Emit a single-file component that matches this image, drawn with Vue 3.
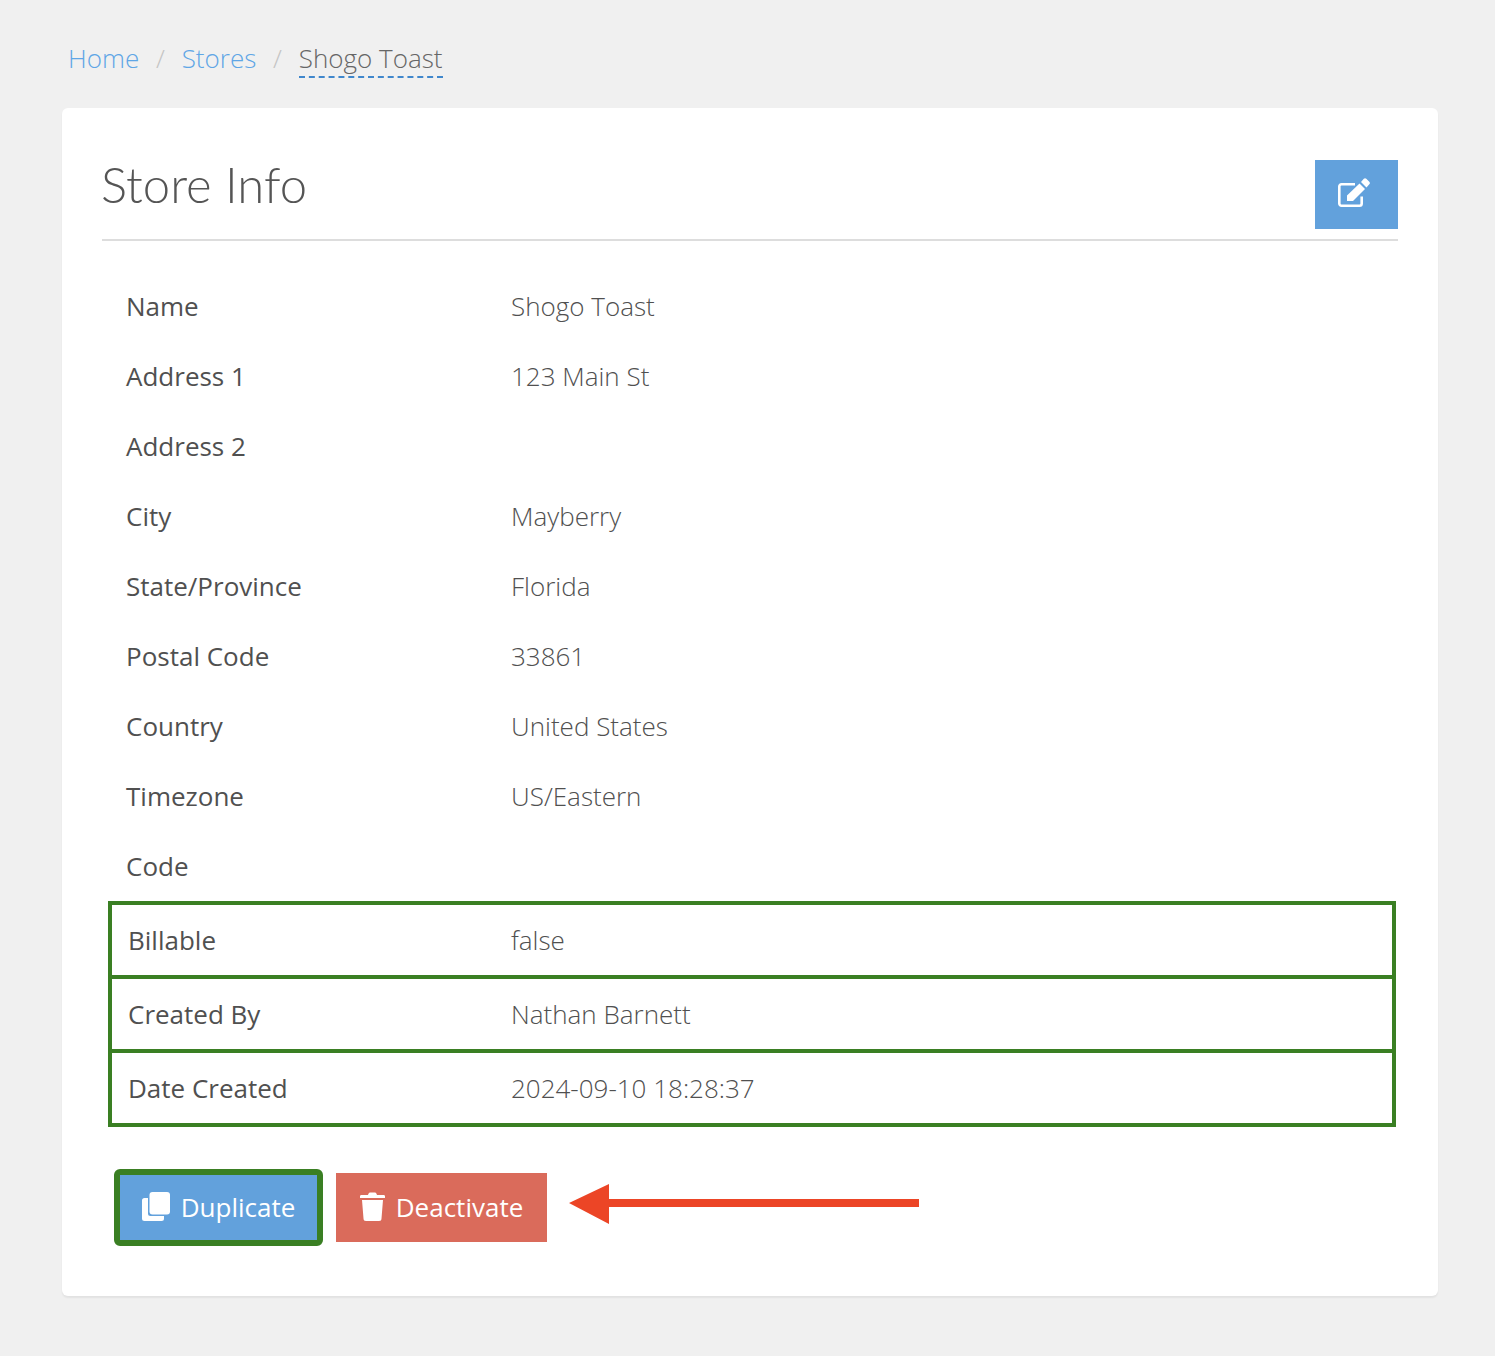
<script setup>
const plainRows = [
  ['Name', 'Shogo Toast'],
  ['Address 1', '123 Main St'],
  ['Address 2', ''],
  ['City', 'Mayberry'],
  ['State/Province', 'Florida'],
  ['Postal Code', '33861'],
  ['Country', 'United States'],
  ['Timezone', 'US/Eastern'],
  ['Code', ''],
]
const boxedRows = [
  ['Billable', 'false'],
  ['Created By', 'Nathan Barnett'],
  ['Date Created', '2024-09-10 18:28:37'],
]
</script>

<template>
  <div class="page">
    <nav class="crumbs">
      <a class="crumb-link">Home</a>
      <span class="sep">/</span>
      <a class="crumb-link">Stores</a>
      <span class="sep">/</span>
      <span class="current">Shogo Toast</span>
    </nav>
    <main class="card">
      <header class="head">
        <h1>Store Info</h1>
        <button class="edit" aria-label="Edit">
          <svg width="32" height="29" viewBox="0 0 32 29">
            <path d="M17 6.300H3.500A2.200 2.200 0 0 0 1.300 8.500V25.500A2.200 2.200 0 0 0 3.500 27.700H21.500A2.200 2.200 0 0 0 23.700 25.500V18.500" fill="none" stroke="#fff" stroke-width="2.600"/>
            <path d="M9 23V17.500L21.500 5.500 27 11 15 23z" fill="#fff"/>
            <path d="M23 4 25.800.800a1.800 1.800 0 0 1 2.500 0l3 3a1.800 1.800 0 0 1 0 2.500L28.500 9.500z" fill="#fff"/>
          </svg>
        </button>
      </header>
      <section class="rows">
        <div v-for="r in plainRows" :key="r[0]" class="row">
          <div class="label">{{ r[0] }}</div>
          <div class="value">{{ r[1] }}</div>
        </div>
      </section>
      <section class="boxed">
        <div v-for="r in boxedRows" :key="r[0]" class="box-row">
          <div class="label">{{ r[0] }}</div>
          <div class="value">{{ r[1] }}</div>
        </div>
      </section>
      <div class="actions">
        <button class="btn dup">
          <svg width="28" height="29" viewBox="0 0 28 29">
            <path d="M6 6V21.500a2.500 2.500 0 0 0 2.500 2.500H22v2.500a2.500 2.500 0 0 1-2.500 2.500H2.500A2.500 2.500 0 0 1 0 26.500V8.500A2.500 2.500 0 0 1 2.500 6z" fill="#fff"/>
            <rect x="7.500" y="0" width="20.500" height="22.500" rx="3" fill="#fff"/>
          </svg>
          Duplicate
        </button>
        <button class="btn del">
          <svg width="25" height="29" viewBox="0 0 25 29">
            <path d="M0 4.500c0-1 .5-1.500 1.500-1.500H8C8.500 1 9.500.5 10.500.5h4c1 0 2 .5 2.500 2.500h6.500c1 0 1.500.5 1.500 1.500V6H0z" fill="#fff"/>
            <path d="M2 8h21l-1.500 18.500A2.500 2.500 0 0 1 19 29H6a2.500 2.500 0 0 1-2.500-2.500z" fill="#fff"/>
          </svg>
          Deactivate
        </button>
        <svg class="arrow" width="350" height="40" viewBox="0 0 350 40">
          <path d="M0 19 40 0V15H350V23H40V40z" fill="#ec4526"/>
        </svg>
      </div>
    </main>
  </div>
</template>

<style>
html, body { margin: 0; background: #f0f0f0; }
</style>

<style scoped>
.page {
  height: 1356px;
  box-sizing: border-box;
  padding: 40px 57px 0 62px;
  background: #f0f0f0;
  font-family: "Open Sans", sans-serif;
  font-size: 26px;
  color: #505050;
  overflow: hidden;
}
.crumbs {
  display: flex;
  align-items: flex-start;
  height: 68px;
  padding-left: 6px;
  box-sizing: border-box;
  font-weight: 300;
  line-height: 36px;
}
.crumb-link { color: #5fa6e6; }
.sep { color: #c4c4c4; margin: 0 16.800px; }
.current {
  height: 36px;
  color: #666;
  border-bottom: 2px dashed #3f87cc;
}
.card {
  height: 1188px;
  box-sizing: border-box;
  padding: 40px 40px 0;
  background: #fff;
  border-radius: 6px;
  box-shadow: 0 2px 2px rgba(0, 0, 0, .06);
}
.head {
  display: flex;
  justify-content: space-between;
  align-items: flex-start;
  height: 93px;
  box-sizing: border-box;
  border-bottom: 2px solid #ddd;
}
h1 {
  margin: 0 0 0 -1px;
  padding-top: 3px;
  font-family: Lato, sans-serif;
  font-size: 49px;
  font-weight: 300;
  line-height: 66px;
  color: #555;
}
.edit {
  display: flex;
  align-items: center;
  justify-content: center;
  width: 83px;
  height: 69px;
  margin-top: 12px;
  padding: 0 5px 4px 0;
  border: 0;
  background: #62a1dc;
}
.rows { padding-top: 30px; }
.row {
  display: grid;
  grid-template-columns: 385px 1fr;
  align-items: center;
  height: 70px;
  padding-left: 24px;
  line-height: 70px;
}
.label { font-weight: 400; }
.value { font-weight: 300; }
.boxed {
  margin: 0 2px 0 6px;
  border: solid #3a7f23;
  border-width: 4px;
}
.box-row {
  display: grid;
  grid-template-columns: 383px 1fr;
  align-items: center;
  height: 70px;
  padding-left: 16px;
  line-height: 70px;
}
.box-row + .box-row { border-top: 4px solid #3a7f23; }
.actions {
  position: relative;
  display: flex;
  align-items: center;
  gap: 13px;
  margin: 42px 0 0 12px;
  height: 77px;
}
.btn {
  display: flex;
  align-items: center;
  gap: 11px;
  box-sizing: border-box;
  padding: 0 0 2px;
  border: 0;
  color: #fff;
  font: 400 26px "Open Sans", sans-serif;
}
.dup {
  justify-content: center;
  width: 209px;
  height: 77px;
  background: #62a1dc;
  border: 6px solid #3a7f23;
  border-radius: 6px;
}
.del {
  justify-content: center;
  width: 211px;
  height: 69px;
  background: #da6b5b;
}
.arrow {
  position: absolute;
  left: 455px;
  top: 15px;
}
</style>
